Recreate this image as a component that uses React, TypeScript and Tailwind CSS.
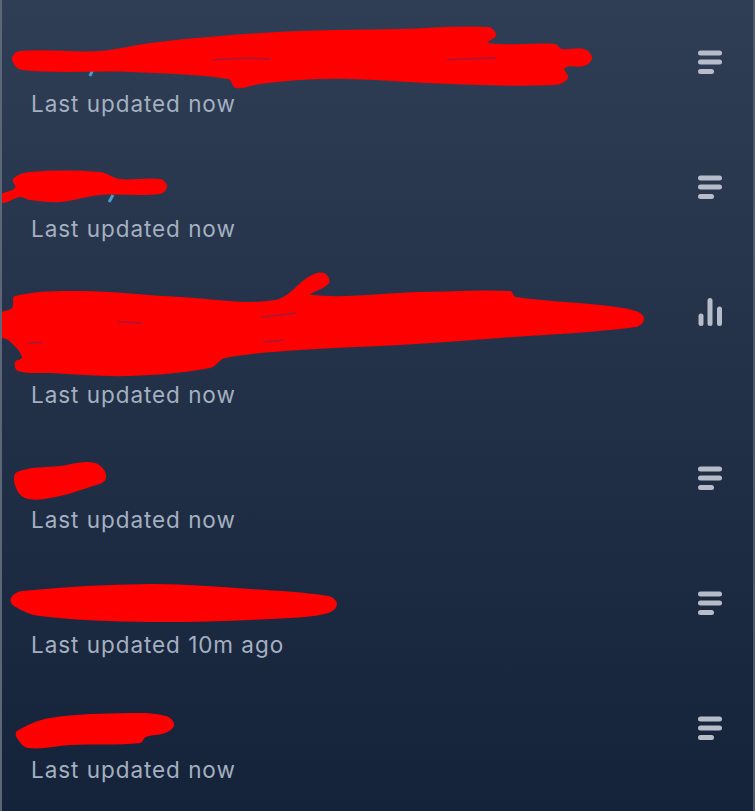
type Point = [number, number]

type Row = {
  updated: string
  icon: 'filter' | 'bars'
  twoLine?: boolean
  scribble: Point[]
  slits?: string[]
  tail?: string
}

const rows: Row[] = [
  {
    updated: 'Last updated now',
    icon: 'filter',
    scribble: [[12, 59], [20, 51], [100, 51], [150, 43], [220, 36], [300, 31], [400, 29], [488, 27], [496, 35], [488, 43], [555, 44], [562, 49], [584, 49], [592, 58], [584, 66], [565, 68], [568, 78], [555, 85], [450, 84], [350, 79], [300, 80], [260, 84], [236, 88], [228, 79], [130, 72], [22, 70]],
    slits: ['M212 60 Q240 57 270 59', 'M447 60 Q475 58 496 58'],
    tail: 'M93 69 L90 76',
  },
  {
    updated: 'Last updated now',
    icon: 'filter',
    scribble: [[13, 179], [30, 172], [100, 172], [120, 179], [160, 179], [167, 186], [160, 194], [100, 195], [60, 202], [30, 200], [20, 197], [2, 203], [-2, 196], [15, 188]],
    tail: 'M113 195 L109 202',
  },
  {
    updated: 'Last updated now',
    icon: 'bars',
    twoLine: true,
    scribble: [[15, 296], [80, 291], [180, 297], [275, 300], [310, 276], [324, 273], [329, 283], [312, 295], [420, 292], [510, 291], [516, 297], [600, 305], [636, 311], [644, 319], [636, 327], [500, 338], [400, 345], [300, 350], [225, 358], [210, 368], [130, 376], [50, 373], [18, 371], [15, 362], [22, 357], [8, 340], [-3, 335], [-3, 315], [12, 308]],
    slits: ['M262 317 Q280 315 296 313', 'M263 342 Q275 341 284 340', 'M28 343 Q34 342 42 343', 'M118 322 Q130 322 142 323'],
  },
  {
    updated: 'Last updated now',
    icon: 'filter',
    scribble: [[17, 472], [60, 466], [95, 463], [106, 478], [90, 487], [50, 498], [25, 498], [15, 485]],
  },
  {
    updated: 'Last updated 10m ago',
    icon: 'filter',
    scribble: [[11, 598], [22, 591], [150, 584], [250, 589], [328, 596], [337, 604], [328, 613], [290, 618], [150, 622], [40, 616], [14, 606]],
  },
  {
    updated: 'Last updated now',
    icon: 'filter',
    scribble: [[17, 731], [50, 718], [130, 713], [166, 716], [174, 725], [165, 733], [146, 737], [140, 743], [70, 745], [28, 748], [17, 738]],
  },
]

// smooth closed curve through the points, handles scaled to each segment so short caps don't overshoot
function smooth(points: Point[]) {
  const n = points.length
  const tangent = (i: number): Point => {
    const a = points[(i - 1 + n) % n]
    const b = points[(i + 1) % n]
    const len = Math.hypot(b[0] - a[0], b[1] - a[1]) || 1
    return [(b[0] - a[0]) / len, (b[1] - a[1]) / len]
  }
  let d = `M${points[0][0]} ${points[0][1]}`
  for (let i = 0; i < n; i++) {
    const p1 = points[i]
    const p2 = points[(i + 1) % n]
    const t1 = tangent(i)
    const t2 = tangent((i + 1) % n)
    const h = Math.hypot(p2[0] - p1[0], p2[1] - p1[1]) / 3
    d += ` C${p1[0] + t1[0] * h} ${p1[1] + t1[1] * h} ${p2[0] - t2[0] * h} ${p2[1] - t2[1] * h} ${p2[0]} ${p2[1]}`
  }
  return d + ' Z'
}

function FilterIcon() {
  return (
    <svg width="28" height="28" viewBox="0 0 28 28" className="shrink-0">
      <g stroke="#b6bdc9" strokeWidth="5" strokeLinecap="round">
        <path d="M4.5 5 H23.5" />
        <path d="M4.5 14 H23.5" />
        <path d="M4.5 23.5 H15.5" />
      </g>
    </svg>
  )
}

function BarsIcon() {
  return (
    <svg width="28" height="28" viewBox="0 0 28 28" className="shrink-0">
      <g stroke="#b6bdc9" strokeWidth="5" strokeLinecap="round">
        <path d="M5 18 V25.5" />
        <path d="M14 2.5 V25.5" />
        <path d="M23.5 11 V25.5" />
      </g>
    </svg>
  )
}

function ScribbleLayer({ row, top }: { row: Row; top: number }) {
  return (
    <svg
      width="755"
      height="100"
      viewBox={`0 ${top} 755 100`}
      className="pointer-events-none absolute left-0 top-0 overflow-visible"
    >
      {row.tail && <path d={row.tail} stroke="#4a9fd0" strokeWidth="3" fill="none" />}
      <path d={smooth(row.scribble)} fill="#fe0000" />
      {row.slits?.map((d, i) => (
        <path key={i} d={d} stroke="#a01a3a" strokeWidth="1.5" fill="none" />
      ))}
    </svg>
  )
}

export default function App() {
  return (
    <div className="min-h-[811px] w-[755px] overflow-hidden border-l-2 border-r-2 border-l-[#5b6778] border-r-[#4f5a6c] bg-gradient-to-b from-[#2f3e55] to-[#15233a] pt-[41px] font-['Inter',sans-serif]">
      <div className="-mx-[2px] flex flex-col gap-[47px]">
        {rows.map((row, i) => (
          <div key={i} className="relative flex items-start justify-between pl-[31px] pr-[31px]">
            <div>
              <div className={row.twoLine ? 'h-[82px]' : 'h-[41px]'} />
              <p className="mt-[7px] text-[22.5px] leading-[30px] tracking-[0.95px] text-[#a4b0c0]">{row.updated}</p>
            </div>
            <div className="mt-[7px]">{row.icon === 'filter' ? <FilterIcon /> : <BarsIcon />}</div>
            <ScribbleLayer row={row} top={[41, 166, 291, 457, 582, 707][i]} />
          </div>
        ))}
      </div>
    </div>
  )
}
